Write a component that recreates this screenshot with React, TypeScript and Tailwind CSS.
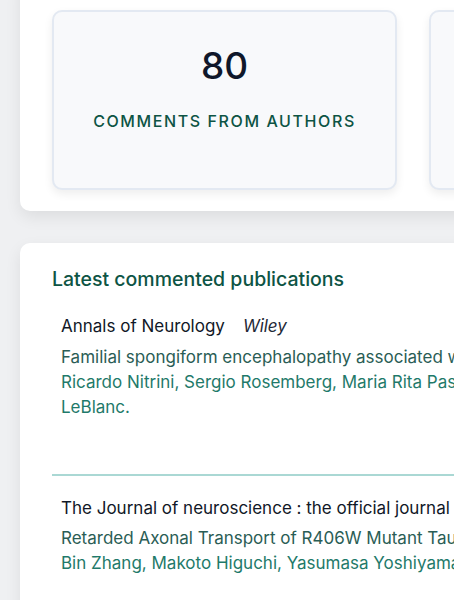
export default function App() {
  const font = { fontFamily: "Inter, 'Noto Sans', sans-serif" };
  return (
    <div className="min-h-screen overflow-hidden bg-[#eff0f2]" style={font}>
      <div className="pl-5">
        <div className="-mt-[22px] w-[600px] rounded-[10px] bg-white pt-8 pb-[21px] pl-8 shadow-[0_6px_16px_rgba(0,0,0,0.08)]">
          <div className="flex gap-8">
            <div className="flex h-[180px] w-[345px] shrink-0 flex-col items-center rounded-[10px] border-2 border-[#e3e9f2] bg-[#f8f9fb] pt-[32px] shadow-[0_4px_10px_rgba(0,0,0,0.07)]">
              <div className="text-[37px] font-medium leading-[44px] text-[#0f172a]">80</div>
              <div className="mt-[21px] text-[16px] font-medium tracking-[0.1em] text-[#0d5444]">
                COMMENTS FROM AUTHORS
              </div>
            </div>
            <div className="h-[180px] w-[345px] shrink-0 rounded-[10px] border-2 border-[#e3e9f2] bg-[#f8f9fb] shadow-[0_4px_10px_rgba(0,0,0,0.07)]" />
          </div>
        </div>

        <div className="mt-8 w-[700px] rounded-[10px] bg-white pt-[22px] pl-8 pb-10 shadow-[0_6px_16px_rgba(0,0,0,0.08)]">
          <h2 className="text-[19.5px] font-medium leading-[28px] text-[#0d5444]">
            Latest commented publications
          </h2>

          <div className="mt-[21px] pl-[9px] pb-[54px] text-[17px] leading-[25px] whitespace-nowrap">
            <div className="flex items-baseline gap-[18px] text-[#111827]">
              <span>Annals of Neurology</span>
              <span className="italic text-[#1f2937]">Wiley</span>
            </div>
            <div className="mt-[6px] text-[#2a5d55]">
              Familial spongiform encephalopathy associated with a novel prion protein gene mutation
            </div>
            <div className="text-[#1f7a6a]">
              Ricardo Nitrini, Sergio Rosemberg, Maria Rita Passos-Bueno, Luis Sergio Teixeira da Silva,
            </div>
            <div className="text-[#1f7a6a]">LeBlanc.</div>
          </div>

          <div className="border-t-2 border-[#aad8d4]" />

          <div className="pt-[20px] pl-[9px] text-[17px] leading-[25px] whitespace-nowrap">
            <div className="text-[#111827]">
              The Journal of neuroscience : the official journal of the Society for Neuroscience
            </div>
            <div className="mt-[5px] text-[#2a5d55]">
              Retarded Axonal Transport of R406W Mutant Tau in Transgenic Mice
            </div>
            <div className="text-[#1f7a6a]">
              Bin Zhang, Makoto Higuchi, Yasumasa Yoshiyama, Takeshi Ishihara
            </div>
          </div>
        </div>
      </div>
    </div>
  );
}
